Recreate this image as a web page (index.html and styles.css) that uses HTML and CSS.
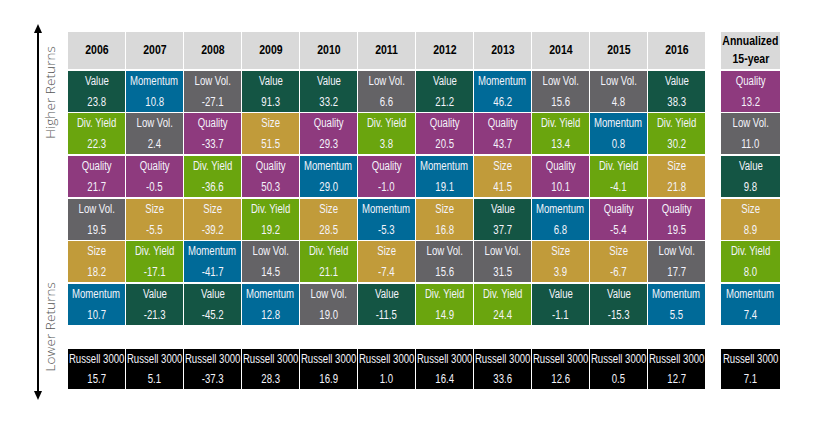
FILE: index.html
```html
<!DOCTYPE html>
<html>
<head>
<meta charset="utf-8">
<link rel="stylesheet" href="styles.css">
</head>
<body>
<div class="page">
  <div class="axis">
    <svg class="arrow" width="10" height="376" viewBox="0 0 10 376">
      <line x1="5" y1="6" x2="5" y2="370" stroke="#000" stroke-width="2"/>
      <polygon points="5,0 1,9 9,9" fill="#000"/>
      <polygon points="5,376 1,367 9,367" fill="#000"/>
    </svg>
    <div class="labels">
      <span class="lbl">Higher Returns</span>
      <span class="lbl">Lower Returns</span>
    </div>
  </div>
  <div class="table">
    <div class="col">
      <div class="hd"><span>2006</span></div>
      <div class="c val"><span>Value</span><span>23.8</span></div>
      <div class="c div"><span>Div. Yield</span><span>22.3</span></div>
      <div class="c qua"><span>Quality</span><span>21.7</span></div>
      <div class="c low"><span>Low Vol.</span><span>19.5</span></div>
      <div class="c siz"><span>Size</span><span>18.2</span></div>
      <div class="c mom"><span>Momentum</span><span>10.7</span></div>
      <div class="c rus"><span>Russell 3000</span><span>15.7</span></div>
    </div>
    <div class="col">
      <div class="hd"><span>2007</span></div>
      <div class="c mom"><span>Momentum</span><span>10.8</span></div>
      <div class="c low"><span>Low Vol.</span><span>2.4</span></div>
      <div class="c qua"><span>Quality</span><span>-0.5</span></div>
      <div class="c siz"><span>Size</span><span>-5.5</span></div>
      <div class="c div"><span>Div. Yield</span><span>-17.1</span></div>
      <div class="c val"><span>Value</span><span>-21.3</span></div>
      <div class="c rus"><span>Russell 3000</span><span>5.1</span></div>
    </div>
    <div class="col">
      <div class="hd"><span>2008</span></div>
      <div class="c low"><span>Low Vol.</span><span>-27.1</span></div>
      <div class="c qua"><span>Quality</span><span>-33.7</span></div>
      <div class="c div"><span>Div. Yield</span><span>-36.6</span></div>
      <div class="c siz"><span>Size</span><span>-39.2</span></div>
      <div class="c mom"><span>Momentum</span><span>-41.7</span></div>
      <div class="c val"><span>Value</span><span>-45.2</span></div>
      <div class="c rus"><span>Russell 3000</span><span>-37.3</span></div>
    </div>
    <div class="col">
      <div class="hd"><span>2009</span></div>
      <div class="c val"><span>Value</span><span>91.3</span></div>
      <div class="c siz"><span>Size</span><span>51.5</span></div>
      <div class="c qua"><span>Quality</span><span>50.3</span></div>
      <div class="c div"><span>Div. Yield</span><span>19.2</span></div>
      <div class="c low"><span>Low Vol.</span><span>14.5</span></div>
      <div class="c mom"><span>Momentum</span><span>12.8</span></div>
      <div class="c rus"><span>Russell 3000</span><span>28.3</span></div>
    </div>
    <div class="col">
      <div class="hd"><span>2010</span></div>
      <div class="c val"><span>Value</span><span>33.2</span></div>
      <div class="c qua"><span>Quality</span><span>29.3</span></div>
      <div class="c mom"><span>Momentum</span><span>29.0</span></div>
      <div class="c siz"><span>Size</span><span>28.5</span></div>
      <div class="c div"><span>Div. Yield</span><span>21.1</span></div>
      <div class="c low"><span>Low Vol.</span><span>19.0</span></div>
      <div class="c rus"><span>Russell 3000</span><span>16.9</span></div>
    </div>
    <div class="col">
      <div class="hd"><span>2011</span></div>
      <div class="c low"><span>Low Vol.</span><span>6.6</span></div>
      <div class="c div"><span>Div. Yield</span><span>3.8</span></div>
      <div class="c qua"><span>Quality</span><span>-1.0</span></div>
      <div class="c mom"><span>Momentum</span><span>-5.3</span></div>
      <div class="c siz"><span>Size</span><span>-7.4</span></div>
      <div class="c val"><span>Value</span><span>-11.5</span></div>
      <div class="c rus"><span>Russell 3000</span><span>1.0</span></div>
    </div>
    <div class="col">
      <div class="hd"><span>2012</span></div>
      <div class="c val"><span>Value</span><span>21.2</span></div>
      <div class="c qua"><span>Quality</span><span>20.5</span></div>
      <div class="c mom"><span>Momentum</span><span>19.1</span></div>
      <div class="c siz"><span>Size</span><span>16.8</span></div>
      <div class="c low"><span>Low Vol.</span><span>15.6</span></div>
      <div class="c div"><span>Div. Yield</span><span>14.9</span></div>
      <div class="c rus"><span>Russell 3000</span><span>16.4</span></div>
    </div>
    <div class="col">
      <div class="hd"><span>2013</span></div>
      <div class="c mom"><span>Momentum</span><span>46.2</span></div>
      <div class="c qua"><span>Quality</span><span>43.7</span></div>
      <div class="c siz"><span>Size</span><span>41.5</span></div>
      <div class="c val"><span>Value</span><span>37.7</span></div>
      <div class="c low"><span>Low Vol.</span><span>31.5</span></div>
      <div class="c div"><span>Div. Yield</span><span>24.4</span></div>
      <div class="c rus"><span>Russell 3000</span><span>33.6</span></div>
    </div>
    <div class="col">
      <div class="hd"><span>2014</span></div>
      <div class="c low"><span>Low Vol.</span><span>15.6</span></div>
      <div class="c div"><span>Div. Yield</span><span>13.4</span></div>
      <div class="c qua"><span>Quality</span><span>10.1</span></div>
      <div class="c mom"><span>Momentum</span><span>6.8</span></div>
      <div class="c siz"><span>Size</span><span>3.9</span></div>
      <div class="c val"><span>Value</span><span>-1.1</span></div>
      <div class="c rus"><span>Russell 3000</span><span>12.6</span></div>
    </div>
    <div class="col">
      <div class="hd"><span>2015</span></div>
      <div class="c low"><span>Low Vol.</span><span>4.8</span></div>
      <div class="c mom"><span>Momentum</span><span>0.8</span></div>
      <div class="c div"><span>Div. Yield</span><span>-4.1</span></div>
      <div class="c qua"><span>Quality</span><span>-5.4</span></div>
      <div class="c siz"><span>Size</span><span>-6.7</span></div>
      <div class="c val"><span>Value</span><span>-15.3</span></div>
      <div class="c rus"><span>Russell 3000</span><span>0.5</span></div>
    </div>
    <div class="col">
      <div class="hd"><span>2016</span></div>
      <div class="c val"><span>Value</span><span>38.3</span></div>
      <div class="c div"><span>Div. Yield</span><span>30.2</span></div>
      <div class="c siz"><span>Size</span><span>21.8</span></div>
      <div class="c qua"><span>Quality</span><span>19.5</span></div>
      <div class="c low"><span>Low Vol.</span><span>17.7</span></div>
      <div class="c mom"><span>Momentum</span><span>5.5</span></div>
      <div class="c rus"><span>Russell 3000</span><span>12.7</span></div>
    </div>
    <div class="col annual">
      <div class="hd two"><span>Annualized</span><span>15-year</span></div>
      <div class="c qua"><span>Quality</span><span>13.2</span></div>
      <div class="c low"><span>Low Vol.</span><span>11.0</span></div>
      <div class="c val"><span>Value</span><span>9.8</span></div>
      <div class="c siz"><span>Size</span><span>8.9</span></div>
      <div class="c div"><span>Div. Yield</span><span>8.0</span></div>
      <div class="c mom"><span>Momentum</span><span>7.4</span></div>
      <div class="c rus"><span>Russell 3000</span><span>7.1</span></div>
    </div>
  </div>
</div>
</body>
</html>
```

FILE: styles.css
```css
html, body {
  margin: 0;
  padding: 0;
  background: #ffffff;
}

.page {
  display: flex;
  padding-top: 24px;
}

.axis {
  display: flex;
  margin-left: 33px;
  height: 376px;
}

.arrow {
  display: block;
}

.labels {
  display: flex;
  flex-direction: column;
  justify-content: space-between;
  padding: 22px 0 28px 0;
  margin-left: -1px;
  width: 16px;
}

.lbl {
  writing-mode: vertical-rl;
  transform: rotate(180deg);
  font-family: "Open Sans", "Liberation Sans", sans-serif;
  font-weight: 300;
  font-size: 13.5px;
  line-height: 16px;
  color: #555555;
  letter-spacing: 0.1px;
}

.table {
  display: flex;
  gap: 1px;
  margin-top: 8px;
  margin-left: 10px;
}

.col {
  display: flex;
  flex-direction: column;
  gap: 1.5px;
  width: 57px;
}

.annual {
  width: 59px;
  margin-left: 15px;
}

.hd {
  height: 36.5px;
  background: #d9d9d9;
  display: flex;
  flex-direction: column;
  align-items: center;
  justify-content: center;
  font-family: "Liberation Sans", Arial, sans-serif;
  font-weight: bold;
  font-size: 12.5px;
  color: #000;
  margin-bottom: 0.5px;
  white-space: nowrap;
}

.hd span {
  display: block;
  transform: scaleX(0.84);
}

.hd.two {
  line-height: 18px;
}

.c {
  height: 41.2px;
  display: flex;
  flex-direction: column;
  align-items: center;
  font-family: "Liberation Sans", Arial, sans-serif;
  font-size: 12px;
  line-height: 21px;
  color: #f4f4fb;
  white-space: nowrap;
}

.c span {
  display: block;
  transform: scaleX(0.8);
}

.c.rus {
  height: 40px;
  line-height: 20px;
  margin-top: 22.5px;
  background: #000;
}

.val { background: #145544; }
.mom { background: #006a98; }
.low { background: #646366; }
.div { background: #6aa50e; }
.qua { background: #8e3a7e; }
.siz { background: #c19b3a; }
```
